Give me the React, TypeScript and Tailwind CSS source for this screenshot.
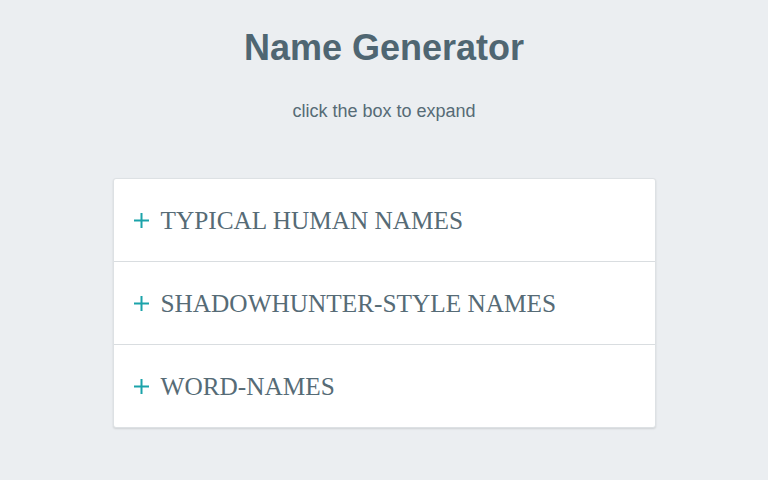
import { useState } from "react";

const sections = [
  { name: "TYPICAL HUMAN NAMES" },
  { name: "SHADOWHUNTER-STYLE NAMES" },
  { name: "WORD-NAMES" },
];

function Plus() {
  return (
    <svg width="17" height="17" viewBox="0 0 17 17" className="shrink-0">
      <path d="M8.5 1v15M1 8.5h15" stroke="#1ba3aa" strokeWidth="2" fill="none" />
    </svg>
  );
}

export default function App() {
  const [open, setOpen] = useState<number | null>(null);

  return (
    <div className="min-h-[480px] w-full bg-[#ebeef1] flex flex-col items-center font-['Liberation_Sans',Arial,sans-serif]">
      <h1 className="mt-[26px] text-[36px] leading-[44px] font-bold text-[#4f6672]">Name Generator</h1>
      <p className="mt-[29px] text-[18px] leading-[24px] text-[#566b76]">click the box to expand</p>

      <div className="mt-[55px] w-[543px] bg-white rounded-[3px] border border-[#dde1e4] shadow-[0_1px_2px_rgba(0,0,0,0.12)]">
        {sections.map((s, i) => (
          <button
            key={s.name}
            onClick={() => setOpen(open === i ? null : i)}
            className={`w-full flex items-center gap-[11px] pl-[19px] text-left ${
              i < sections.length - 1 ? "h-[83px] border-b border-[#d9dde0]" : "h-[82px]"
            }`}
          >
            <Plus />
            <span className="mt-[2px] font-['Liberation_Serif','Times_New_Roman',serif] text-[25.3px] text-[#566b76] leading-none">
              {s.name}
            </span>
          </button>
        ))}
      </div>
    </div>
  );
}
